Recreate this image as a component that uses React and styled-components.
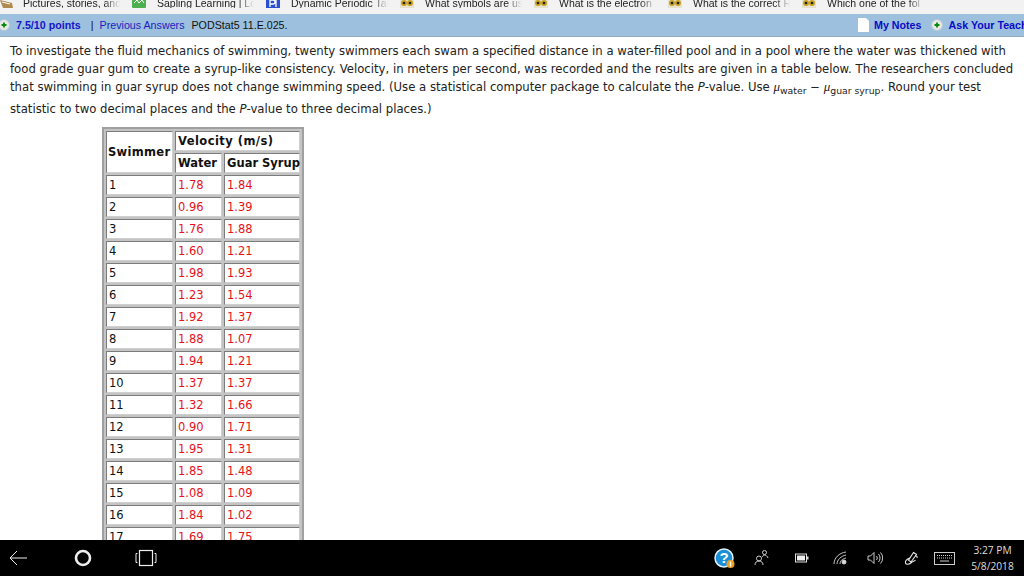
import React from "react";
import styled, { createGlobalStyle } from "styled-components";

const Global = createGlobalStyle`
  html, body { margin: 0; padding: 0; width: 1024px; height: 576px; overflow: hidden; background: #fff; }
  #root { width: 1024px; height: 576px; }
`;
const Page = styled.div`
  width: 1024px; height: 576px; display: flex; flex-direction: column; overflow: hidden;
`;
const Bookmarks = styled.div`
  height: 14px; flex: none; background: #f2f2f2; overflow: hidden;
  font: 10.5px/14px "Liberation Sans", sans-serif; color: #222;
`;
const BookmarkRow = styled.div`
  display: flex; height: 14px; margin-top: -6px; margin-left: -2px; padding-left: 2px; gap: 12px;
`;
const Bookmark = styled.div`
  flex: none; width: ${p => p.$w || 122}px; display: flex; align-items: center; gap: ${p => p.$gap || 11}px; overflow: hidden; white-space: nowrap;
  svg { flex: none; }
`;
const BookmarkText = styled.span`
  flex: none; width: 97px; overflow: hidden; padding-top: 3px; line-height: 14px;
  -webkit-mask-image: linear-gradient(to right, #000 84%, transparent 100%);
  mask-image: linear-gradient(to right, #000 84%, transparent 100%);
`;
const Bar = styled.div`
  height: 23px; flex: none; background: #9cc0de; border-bottom: 1px solid #93a9bd; display: flex; align-items: center; box-sizing: border-box;
  font: 10.7px "Liberation Sans", sans-serif; color: #111; overflow: hidden;
`;
const Score = styled.b` color: #1414c8; margin-left: 6px; `;
const Sep = styled.span` margin-left: 10px; `;
const BarLink = styled.span` color: #1c1cc0; margin-left: 6px; `;
const Code = styled.span` margin-left: 7px; `;
const Right = styled.div` margin-left: auto; display: flex; align-items: center; white-space: nowrap; overflow: hidden; width: 166px; flex: none; svg { flex: none; } `;
const ActionLink = styled.b` color: #0a0ac8; margin-left: ${p => p.$ml || 0}px; margin-right: ${p => p.$mr || 0}px; `;
const Main = styled.div`
  flex: 1; min-height: 0; overflow: hidden; padding: 5px 10px 0; font: 11.68px/18px "DejaVu Sans", Verdana, sans-serif; color: #222;
`;
const Para = styled.p` margin: 0; width: 1006px; `;
const Mu = styled.i` font-family: "Liberation Serif", serif; font-size: 13px; `;
const Sub = styled.sub` font-size: 9.3px; vertical-align: -3px; `;
const Table = styled.table`
  margin: 9px 0 0 92px; border-collapse: separate; border-spacing: 2px; border: 2px solid #a0a0a0; background: #c4c4c4;
  font: 11.5px "DejaVu Sans", Verdana, sans-serif; color: #111; table-layout: fixed; width: 202px;
`;
const Col = styled.col` width: ${p => (p.$w ? `${p.$w}px` : "auto")}; `;
const cell = `
  border-style: solid; border-width: 1px; border-color: #7c7c7c #cfcfcf #cfcfcf #7c7c7c; padding: 0 2px; height: 18px; line-height: 18px; background: #fff; box-sizing: content-box;
`;
const Th = styled.th`
  ${cell} text-align: left; font-weight: 700; white-space: nowrap; letter-spacing: ${p => p.$ls || 0}px; padding-left: ${p => p.$pl ?? 2}px;
`;
const Td = styled.td`
  ${cell} color: ${p => p.$red ? "#e8121a" : "#111"};
`;
const Taskbar = styled.div`
  height: 36px; flex: none; background: #000; display: flex; align-items: center; color: #fff; position: relative;
`;
const Nav = styled.div` display: flex; align-items: center; padding-left: 9px; `;
const NavIcon = styled.svg` margin-left: ${p => p.$ml || 0}px; flex: none; `;
const PlusIcon = styled.svg` margin-left: ${p => p.$ml || 0}px; flex: none; `;
const Tray = styled.div` margin-left: auto; display: flex; align-items: center; `;
const TrayIcon = styled.div` width: ${p => p.$w}px; padding-left: ${p => p.$pl || 0}px; box-sizing: border-box; display: flex; justify-content: center; align-items: center; `;
const Clock = styled.div` width: 59px; text-align: center; font: 10.2px/16px "Open Sans", "Liberation Sans", sans-serif; color: #ddd; margin-left: 4px; margin-right: 2px; `;

const rows = [
  [1,"1.78","1.84"],[2,"0.96","1.39"],[3,"1.76","1.88"],[4,"1.60","1.21"],[5,"1.98","1.93"],[6,"1.23","1.54"],
  [7,"1.92","1.37"],[8,"1.88","1.07"],[9,"1.94","1.21"],[10,"1.37","1.37"],[11,"1.32","1.66"],[12,"0.90","1.71"],
  [13,"1.95","1.31"],[14,"1.85","1.48"],[15,"1.08","1.09"],[16,"1.84","1.02"],[17,"1.69","1.75"],
];

const Owl = () => (
  <svg width="14" height="14" viewBox="0 0 14 14"><rect width="14" height="14" fill="#e6e2cc"/><circle cx="4" cy="9" r="3" fill="#c8a020"/><circle cx="10" cy="9" r="3" fill="#c8a020"/><circle cx="4" cy="9" r="1.3" fill="#222"/><circle cx="10" cy="9" r="1.3" fill="#222"/></svg>
);
const Plus = ({ $ml }) => (
  <PlusIcon $ml={$ml} width="12" height="12" viewBox="0 0 12 12"><circle cx="6" cy="6" r="5.5" fill="#e8e8e8" stroke="#b8c8d4"/><path d="M3.5 6h5M6 3.5v5" stroke="#0a8a0a" strokeWidth="1.8"/></PlusIcon>
);

const labels = ["Sapling Learning | Lo","Dynamic Periodic Tal","What symbols are us","What is the electron","What is the correct R","Which one of the fol"];
const icons = [
  <svg key="b" width="14" height="14" viewBox="0 0 14 14"><rect width="14" height="14" rx="1" fill="#4caf50"/><path d="M2 9l3-3 2 3 3-3 2 3" stroke="#fff" fill="none"/></svg>,
  <svg key="c" width="14" height="14" viewBox="0 0 14 14"><rect width="14" height="14" fill="#2a4fd0"/><path d="M4 13V6h3a2 2 0 010 4H4M10 6v7" stroke="#fff" fill="none" strokeWidth="1.3"/></svg>,
  <Owl key="d" />, <Owl key="e" />, <Owl key="f" />, <Owl key="g" />,
];

export default function App() {
  return (
    <Page>
      <Global />
      <Bookmarks>
        <BookmarkRow>
          <Bookmark $w={120} $gap={9}>
            <svg width="14" height="14" viewBox="0 0 14 14"><path d="M0 6l12 3 1 5H3z" fill="#b08a50"/><path d="M2 8l8 2" stroke="#fff"/></svg>
            <BookmarkText>Pictures, stories, and</BookmarkText>
          </Bookmark>
          {labels.map((l, i) => (
            <Bookmark key={l}>{icons[i]}<BookmarkText>{l}</BookmarkText></Bookmark>
          ))}
        </BookmarkRow>
      </Bookmarks>
      <Bar>
        <Plus $ml={-2} />
        <Score>7.5/10 points</Score>
        <Sep>|</Sep>
        <BarLink>Previous Answers</BarLink>
        <Code>PODStat5 11.E.025.</Code>
        <Right>
          <svg width="11" height="14" viewBox="0 0 11 14"><path d="M0 0h8l3 3v11H0z" fill="#fff"/></svg>
          <ActionLink $ml={5} $mr={9}>My Notes</ActionLink>
          <Plus />
          <ActionLink $ml={6}>Ask Your Teacher</ActionLink>
        </Right>
      </Bar>
      <Main>
        <Para>
          To investigate the fluid mechanics of swimming, twenty swimmers each swam a specified distance in a water-filled pool and in a pool where the water was thickened with food grade guar gum to create a syrup-like consistency. Velocity, in meters per second, was recorded and the results are given in a table below. The researchers concluded that swimming in guar syrup does not change swimming speed. (Use a statistical computer package to calculate the <i>P</i>-value. Use <Mu>μ</Mu><Sub>water</Sub> − <Mu>μ</Mu><Sub>guar syrup</Sub>. Round your test statistic to two decimal places and the <i>P</i>-value to three decimal places.)
        </Para>
        <Table>
          <colgroup><Col $w={67} /><Col $w={47} /><Col /></colgroup>
          <thead>
            <tr><Th rowSpan={2} $pl={1} $ls={0.3}>Swimmer</Th><Th colSpan={2} $ls={0.45}>Velocity (m/s)</Th></tr>
            <tr><Th>Water</Th><Th>Guar Syrup</Th></tr>
          </thead>
          <tbody>
            {rows.map(r => (
              <tr key={r[0]}><Td>{r[0]}</Td><Td $red>{r[1]}</Td><Td $red>{r[2]}</Td></tr>
            ))}
          </tbody>
        </Table>
      </Main>
      <Taskbar>
        <Nav>
          <NavIcon width="18" height="16" viewBox="0 0 18 16" fill="none" stroke="#eee" strokeWidth="1"><path d="M18 8H1M8 1L1 8l7 7"/></NavIcon>
          <NavIcon $ml={47} width="18" height="18" viewBox="0 0 18 18" fill="none" stroke="#eee" strokeWidth="2.6"><circle cx="9" cy="9" r="7"/></NavIcon>
          <NavIcon $ml={43} width="22" height="18" viewBox="0 0 22 18" fill="none" stroke="#eee"><rect x="4.5" y="1.5" width="13" height="15" strokeWidth="1.2"/><path d="M2.5 4.5H1v9h1.5M19.500 4.500H21v9h-1.500" strokeWidth="1"/></NavIcon>
        </Nav>
        <Tray>
          <TrayIcon $w={24}>
            <svg width="22" height="22" viewBox="0 0 22 22"><circle cx="10" cy="11" r="9" fill="#1b8fd8" stroke="#e4f2fb" strokeWidth="1.5"/><text x="10" y="16" textAnchor="middle" fontFamily="Liberation Sans" fontWeight="700" fontSize="15" fill="#fff">?</text><circle cx="16.500" cy="17" r="4" fill="#f0a020"/><rect x="15.800" y="14.500" width="1.400" height="5" fill="#fff"/></svg>
          </TrayIcon>
          <TrayIcon $w={43} $pl={5}>
            <svg width="15" height="16" viewBox="0 0 15 16" fill="none" stroke="#e4e4e4" strokeWidth="0.9"><circle cx="5" cy="8.500" r="2.500"/><path d="M1 15c0-2.500 1.500-4 4-4s4 1.500 4 4"/><circle cx="10.500" cy="2.500" r="2"/><path d="M8.500 7c0-1 1-2 2-2s3 1 3.500 3"/></svg>
          </TrayIcon>
          <TrayIcon $w={44}>
            <svg width="14" height="10" viewBox="0 0 14 10"><rect x="0.500" y="1" width="11" height="8" fill="none" stroke="#ddd"/><rect x="2" y="2.500" width="8" height="5" fill="#eee"/><rect x="12" y="3.500" width="1.500" height="3" fill="#ddd"/></svg>
          </TrayIcon>
          <TrayIcon $w={32}>
            <svg width="14" height="14" viewBox="0 0 14 14" fill="none" stroke="#ddd" strokeWidth="0.9"><path d="M1 13C1 7 6 2 13 1M4 13c0-4 4-8 9-9M7 13c0-3 2-5 6-6"/><circle cx="11" cy="11" r="2" fill="#ddd"/></svg>
          </TrayIcon>
          <TrayIcon $w={37}>
            <svg width="16" height="14" viewBox="0 0 16 14" fill="none" stroke="#ddd" strokeWidth="0.9"><path d="M1 5h2.500L7 1.500v11L3.500 9H1zM9.500 5a3 3 0 010 4M11.500 3a6 6 0 010 8M13.500 1.500a8 8 0 010 11"/></svg>
          </TrayIcon>
          <TrayIcon $w={36}>
            <svg width="15" height="15" viewBox="0 0 15 15" fill="none" stroke="#e8e8e8" strokeWidth="1.1"><path d="M9.500 1.500l3 2-5.500 7.500-2.500-1.800zM11 4.500c1.500 0 2.500 1 2 2.500"/><path d="M6 7c-3 1-5 3-4.500 5s4 1.500 6-.5c1.500-1.200 3-1.300 4-2.300"/></svg>
          </TrayIcon>
          <TrayIcon $w={30}>
            <svg width="21" height="13" viewBox="0 0 21 13" fill="none" stroke="#ccc"><rect x="0.500" y="0.500" width="20" height="12"/><path d="M3 3.500h15M3 6h15" strokeDasharray="1 1"/><path d="M6 9h9"/></svg>
          </TrayIcon>
          <Clock>3:27 PM<br/>5/8/2018</Clock>
        </Tray>
      </Taskbar>
    </Page>
  );
}
